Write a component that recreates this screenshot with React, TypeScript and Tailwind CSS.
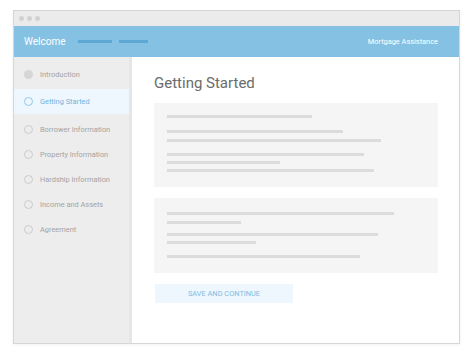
const font = { fontFamily: 'Roboto, "Liberation Sans", sans-serif' }

const steps = [
  { label: 'Introduction', state: 'done', mt: 'mt-0' },
  { label: 'Getting Started', state: 'active', mt: 'mt-[2px]' },
  { label: 'Borrower Information', state: 'todo', mt: 'mt-[3px]' },
  { label: 'Property Information', state: 'todo', mt: 'mt-0' },
  { label: 'Hardship Information', state: 'todo', mt: 'mt-0' },
  { label: 'Income and Assets', state: 'todo', mt: 'mt-0' },
  { label: 'Agreement', state: 'todo', mt: 'mt-0' },
]

function Line({ w, mt }: { w: string; mt: string }) {
  return <div className={`h-[3px] bg-[#dcdcdc] ${w} ${mt}`}></div>
}

export default function App() {
  return (
    <div className="w-[474px] h-[355px] bg-white pt-[10px] pl-[13px]" style={font}>
      <div className="w-[447px] h-[334px] border border-[#d6d6d6] flex flex-col shadow-[0_1px_3px_rgba(0,0,0,0.06)]">
        <div className="h-[15px] bg-[#ebebeb] flex items-center gap-[3px] pl-[5px]">
          <div className="w-[5px] h-[5px] rounded-full bg-[#d2d2d2]"></div>
          <div className="w-[5px] h-[5px] rounded-full bg-[#d2d2d2]"></div>
          <div className="w-[5px] h-[5px] rounded-full bg-[#d2d2d2]"></div>
        </div>
        <div className="h-[31px] bg-[#85c1e3] flex items-center pl-[10px] pr-[21px]">
          <span className="text-white text-[10px] leading-none">Welcome</span>
          <div className="ml-[13px] w-[34px] h-[3px] bg-[#5ea8d5]"></div>
          <div className="ml-[7px] w-[29px] h-[3px] bg-[#5ea8d5]"></div>
          <span className="ml-auto text-white text-[7.4px] leading-none">Mortgage Assistance</span>
        </div>
        <div className="flex flex-1">
          <div className="w-[118px] bg-[#ededed] border-r-[3px] border-[#e6e6e6] pt-[5px] flex flex-col">
            {steps.map((s) => (
              <div
                key={s.label}
                className={`h-[25px] flex items-center pl-[10px] gap-[7px] ${s.mt} ${s.state === 'active' ? 'bg-[#eef7fd]' : ''}`}
              >
                {s.state === 'done' && <div className="w-[9px] h-[9px] rounded-full bg-[#d6d6d6]"></div>}
                {s.state === 'active' && <div className="w-[9px] h-[9px] rounded-full border border-[#8fcaea]"></div>}
                {s.state === 'todo' && <div className="w-[9px] h-[9px] rounded-full border border-[#cbcbcb]"></div>}
                <span className={`text-[7.4px] leading-none ${s.state === 'active' ? 'text-[#6fb5e0]' : 'text-[#a3a3a3]'}`}>
                  {s.label}
                </span>
              </div>
            ))}
          </div>
          <div className="flex-1 pl-[22px] pt-[16px]">
            <div className="text-[15px] leading-[20px] text-[#6b6b6b]">Getting Started</div>
            <div className="mt-[10px] w-[284px] bg-[#f5f5f5] pl-[13px] pt-[12px] pb-[15px]">
              <Line w="w-[145px]" mt="mt-0" />
              <Line w="w-[176px]" mt="mt-[12px]" />
              <Line w="w-[214px]" mt="mt-[6px]" />
              <Line w="w-[197px]" mt="mt-[11px]" />
              <Line w="w-[113px]" mt="mt-[5px]" />
              <Line w="w-[207px]" mt="mt-[5px]" />
            </div>
            <div className="mt-[11px] w-[284px] bg-[#f5f5f5] pl-[13px] pt-[14px] pb-[15px]">
              <Line w="w-[227px]" mt="mt-0" />
              <Line w="w-[74px]" mt="mt-[6px]" />
              <Line w="w-[211px]" mt="mt-[9px]" />
              <Line w="w-[89px]" mt="mt-[5px]" />
              <Line w="w-[193px]" mt="mt-[11px]" />
            </div>
            <div className="mt-[11px] ml-[1px] w-[138px] h-[19px] bg-[#eef7fd] flex items-center justify-center text-[7.4px] leading-none text-[#7dbce3]">
              SAVE AND CONTINUE
            </div>
          </div>
        </div>
      </div>
    </div>
  )
}
